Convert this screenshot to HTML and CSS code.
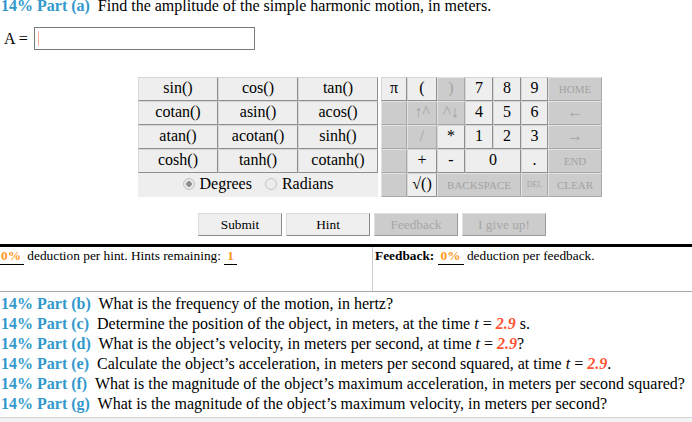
FILE: index.html
```html
<!DOCTYPE html>
<html lang="en">
<head>
<meta charset="utf-8">
<title>Simple harmonic motion</title>
<link rel="stylesheet" href="styles.css">
</head>
<body>
<div class="page">
  <section class="part-a">
    <p class="qline"><span class="tag">14% Part (a)</span> Find the amplitude of the simple harmonic motion, in meters.</p>
    <div class="answer-row">
      <span class="lbl">A =</span>
      <div class="input"><span class="caret"></span></div>
    </div>
    <div class="keypad">
      <div class="fn-grid">
        <div class="key">sin()</div>
        <div class="key">cos()</div>
        <div class="key">tan()</div>
        <div class="key">cotan()</div>
        <div class="key">asin()</div>
        <div class="key">acos()</div>
        <div class="key">atan()</div>
        <div class="key">acotan()</div>
        <div class="key">sinh()</div>
        <div class="key">cosh()</div>
        <div class="key">tanh()</div>
        <div class="key">cotanh()</div>
        <div class="angle-row">
          <label class="opt"><input type="radio" class="radio" name="ang" checked> Degrees</label>
          <label class="opt"><input type="radio" class="radio" name="ang"> Radians</label>
        </div>
      </div>
      <div class="num-grid">
        <div class="key">π</div>
        <div class="key">(</div>
        <div class="key off">)</div>
        <div class="key">7</div>
        <div class="key">8</div>
        <div class="key">9</div>
        <div class="key off small">HOME</div>

        <div class="key off"></div>
        <div class="key off">↑^</div>
        <div class="key off">^↓</div>
        <div class="key">4</div>
        <div class="key">5</div>
        <div class="key">6</div>
        <div class="key off">←</div>

        <div class="key off"></div>
        <div class="key off">/</div>
        <div class="key">*</div>
        <div class="key">1</div>
        <div class="key">2</div>
        <div class="key">3</div>
        <div class="key off">→</div>

        <div class="key off"></div>
        <div class="key">+</div>
        <div class="key">-</div>
        <div class="key span2">0</div>
        <div class="key">.</div>
        <div class="key off small">END</div>

        <div class="key off"></div>
        <div class="key">√()</div>
        <div class="key off small span3">BACKSPACE</div>
        <div class="key off tiny">DEL</div>
        <div class="key off small">CLEAR</div>
      </div>
    </div>
    <div class="actions">
      <button class="btn" type="button">Submit</button>
      <button class="btn" type="button">Hint</button>
      <button class="btn" type="button" disabled>Feedback</button>
      <button class="btn" type="button" disabled>I give up!</button>
    </div>
  </section>
  <div class="rule"></div>
  <div class="hint-row">
    <div class="hint-left"><span class="blank">0%</span> deduction per hint. Hints remaining: <span class="blank">1</span></div>
    <div class="hint-right"><b>Feedback:</b> <span class="blank">0%</span> deduction per feedback.</div>
  </div>
  <div class="parts">
    <p class="qline"><span class="tag">14% Part (b)</span> What is the frequency of the motion, in hertz?</p>
    <p class="qline"><span class="tag">14% Part (c)</span> Determine the position of the object, in meters, at the time <i>t</i> = <b class="val">2.9</b> s.</p>
    <p class="qline"><span class="tag">14% Part (d)</span> What is the object’s velocity, in meters per second, at time <i>t</i> = <b class="val">2.9</b>?</p>
    <p class="qline"><span class="tag">14% Part (e)</span> Calculate the object’s acceleration, in meters per second squared, at time <i>t</i> = <b class="val">2.9</b>.</p>
    <p class="qline"><span class="tag">14% Part (f)</span> What is the magnitude of the object’s maximum acceleration, in meters per second squared?</p>
    <p class="qline"><span class="tag">14% Part (g)</span> What is the magnitude of the object’s maximum velocity, in meters per second?</p>
  </div>
  <div class="footer"></div>
</div>
</body>
</html>
```

FILE: styles.css
```css
html, body {
  margin: 0;
  padding: 0;
  background: #fff;
}
body {
  font-family: "Liberation Serif", "Times New Roman", serif;
  font-size: 16px;
  color: #000;
  overflow: hidden;
}
.page {
  margin-top: -4px;
}
.qline {
  margin: 0;
  padding-left: 1px;
  line-height: 20px;
  white-space: nowrap;
}
.tag {
  color: #3399cc;
  font-weight: bold;
  margin-right: 4px;
}
.answer-row {
  display: flex;
  align-items: center;
  gap: 6px;
  margin-top: 11px;
  padding-left: 4px;
}
.lbl {
  line-height: 20px;
}
.input {
  width: 216px;
  height: 21px;
  border: 1px solid #7a7a7a;
  display: flex;
  align-items: center;
  padding-left: 3px;
}
.caret {
  width: 1px;
  height: 15px;
  background: #f7b49a;
}
.keypad {
  display: flex;
  gap: 3px;
  margin-top: 27px;
  margin-left: 138px;
}
.fn-grid {
  display: grid;
  grid-template-columns: repeat(3, 80px);
  grid-auto-rows: 24px;
}
.num-grid {
  display: grid;
  grid-template-columns: 26px 30px 28px 28px 28px 27px 54px;
  grid-auto-rows: 24px;
}
.key {
  box-sizing: border-box;
  background: #eeeeee;
  border: 1px solid;
  border-color: #d6d6d6 #8f8f8f #8f8f8f #d6d6d6;
  display: flex;
  align-items: center;
  justify-content: center;
  line-height: 18px;
  padding-bottom: 2px;
  white-space: nowrap;
}
.key.off {
  background: #cccccc;
  color: #a3a3a3;
  border-color: #e2e2e2 #a8a8a8 #a8a8a8 #e2e2e2;
}
.key.small {
  font-size: 11px;
  padding-bottom: 0;
}
.key.tiny {
  font-size: 8px;
  padding-bottom: 0;
}
.span2 {
  grid-column: span 2;
}
.span3 {
  grid-column: span 3;
}
.angle-row {
  grid-column: 1 / -1;
  background: #eeeeee;
  display: flex;
  align-items: center;
  justify-content: center;
  gap: 13px;
  padding-bottom: 2px;
}
.opt {
  display: flex;
  align-items: center;
  gap: 1px;
}
.radio {
  appearance: none;
  -webkit-appearance: none;
  box-sizing: border-box;
  width: 12px;
  height: 12px;
  margin: 0 4px 0 0;
  border: 1px solid #c2c2c2;
  border-radius: 50%;
  background: #ececec;
}
.radio:checked {
  background: radial-gradient(circle, #8c8c8c 0 2.5px, #e6e6e6 3px);
}
.actions {
  display: flex;
  gap: 4px;
  margin-top: 16px;
  margin-left: 198px;
}
.btn {
  box-sizing: border-box;
  width: 84px;
  height: 23px;
  padding: 0;
  font-family: "Liberation Serif", "Times New Roman", serif;
  font-size: 13.33px;
  color: #000;
  background: #efefef;
  border: 1px solid;
  border-color: #dcdcdc #8a8a8a #8a8a8a #dcdcdc;
}
.btn:disabled {
  background: #cccccc;
  color: #a6a6a6;
  border-color: #e0e0e0 #9a9a9a #9a9a9a #e0e0e0;
}
.rule {
  height: 3px;
  background: #000;
  margin-top: 8px;
}
.hint-row {
  display: flex;
  height: 44px;
  border-bottom: 1px solid #a8a8a8;
  font-size: 13.33px;
  line-height: 16px;
}
.hint-left {
  width: 372px;
  padding-top: 1px;
  white-space: nowrap;
}
.hint-right {
  flex: 1;
  border-left: 1px solid #cfcfcf;
  padding: 1px 0 0 2px;
  white-space: nowrap;
}
.blank {
  color: #ff9a1f;
  font-weight: bold;
  border-bottom: 1px solid #000;
  padding: 0 3px 1px;
}
.hint-left > .blank:first-child {
  padding-left: 1px;
}
.parts {
  padding: 2px 0 3px;
}
.val {
  color: #ff5533;
  font-style: italic;
}
.footer {
  height: 12px;
  border-top: 1px solid #d4d4d4;
  background: #f3f3f3;
}
```
